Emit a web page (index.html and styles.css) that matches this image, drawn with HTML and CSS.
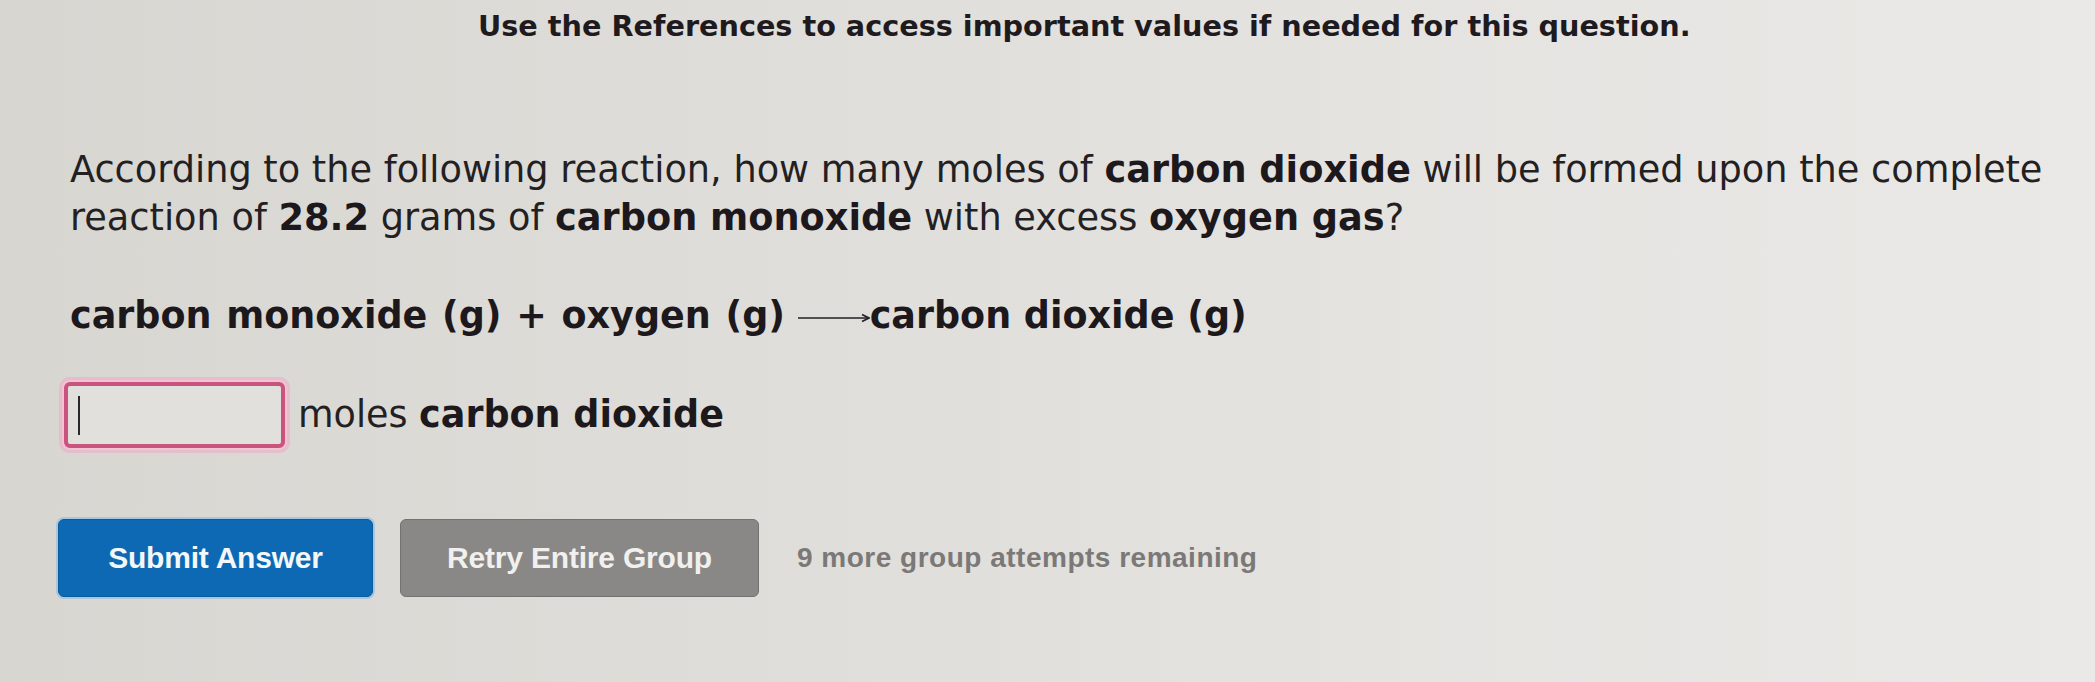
FILE: index.html
```html
<!DOCTYPE html>
<html lang="en">
<head>
<meta charset="utf-8">
<title>Question</title>
<link rel="stylesheet" href="styles.css">
</head>
<body>
<div class="page">
  <div class="refs">Use the References to access important values if needed for this question.</div>

  <p class="question"><span class="line">According to the following reaction, how many moles of <b>carbon dioxide</b> will be formed upon the complete</span><span class="line">reaction of <b>28.2</b> grams of <b>carbon monoxide</b> with excess <b>oxygen gas</b>?</span></p>

  <div class="equation"><span class="lhs">carbon monoxide (g) + oxygen (g)</span> <svg class="arrow" width="72" height="12" viewBox="0 0 72 12"><line x1="0" y1="6" x2="70" y2="6" stroke="#231f23" stroke-width="1.6"/><path d="M64 2.5 L71 6 L64 9.5" fill="none" stroke="#231f23" stroke-width="1.6"/></svg><span class="rhs">carbon dioxide (g)</span></div>

  <div class="answer-row">
    <div class="answer-box"><span class="caret"></span></div>
    <span class="unit">moles <b>carbon dioxide</b></span>
  </div>

  <div class="actions">
    <button class="btn btn-submit" type="button">Submit Answer</button>
    <button class="btn btn-retry" type="button">Retry Entire Group</button>
    <span class="attempts">9 more group attempts remaining</span>
  </div>
</div>
</body>
</html>
```

FILE: styles.css
```css
html, body {
  margin: 0;
  padding: 0;
}

body {
  width: 2095px;
  height: 682px;
  overflow: hidden;
  background: linear-gradient(90deg, #d8d6d1 0%, #dfddd9 35%, #e4e3e0 65%, #eae9e7 100%);
  color: #231f23;
  font-family: "DejaVu Sans", Verdana, sans-serif;
}

.page {
  padding: 8px 0 0 70px;
}

.refs {
  padding-left: 408px;
  font-size: 28.7px;
  font-weight: bold;
  line-height: 36px;
  color: #1e1a1e;
}

.question {
  margin: 102px 0 0 0;
  font-size: 36.7px;
  line-height: 48px;
}

.question .line {
  display: block;
  white-space: nowrap;
}

.question b,
.unit b {
  font-weight: bold;
  color: #1c181c;
}

.equation {
  margin-top: 50px;
  font-size: 36.5px;
  line-height: 48px;
  font-weight: bold;
  color: #1c181c;
  white-space: nowrap;
}

.lhs {
  word-spacing: 2px;
}

.arrow {
  display: inline-block;
  vertical-align: 4px;
  margin-left: 0;
}

.answer-row {
  margin-top: 42px;
  margin-left: -6px;
  display: flex;
  align-items: center;
  gap: 13px;
}

.answer-box {
  box-sizing: border-box;
  width: 221px;
  height: 66px;
  border: 4px solid #c9547d;
  border-radius: 6px;
  background: #e2e0dc;
  box-shadow: 0 0 0 2px #f2c3d3, 0 0 0 5px rgba(236, 170, 196, 0.55);
  display: flex;
  align-items: center;
  padding-left: 10px;
}

.caret {
  display: block;
  width: 2px;
  height: 39px;
  background: #2b2629;
}

.unit {
  font-size: 36.5px;
  line-height: 48px;
}

.actions {
  margin-top: 71px;
  margin-left: -12px;
  display: flex;
  align-items: center;
  gap: 27px;
}

.btn {
  box-sizing: border-box;
  height: 78px;
  padding: 0;
  border-radius: 6px;
  font-family: "Liberation Sans", Arial, sans-serif;
  font-size: 30px;
  font-weight: bold;
  letter-spacing: -0.2px;
  white-space: nowrap;
  text-align: center;
  cursor: pointer;
}

.btn-submit {
  width: 315px;
  background: #0d69b3;
  color: #f4f7fa;
  border: 1px solid #0a5a9c;
  box-shadow: 0 0 0 2px #a9c6e0;
}

.btn-retry {
  width: 359px;
  background: #8a8886;
  color: #f1f0ee;
  border: 1px solid #74726f;
}

.attempts {
  margin-left: 11px;
  font-family: "Liberation Sans", Arial, sans-serif;
  font-size: 28px;
  font-weight: bold;
  letter-spacing: 0.5px;
  color: #7b7978;
}
```
